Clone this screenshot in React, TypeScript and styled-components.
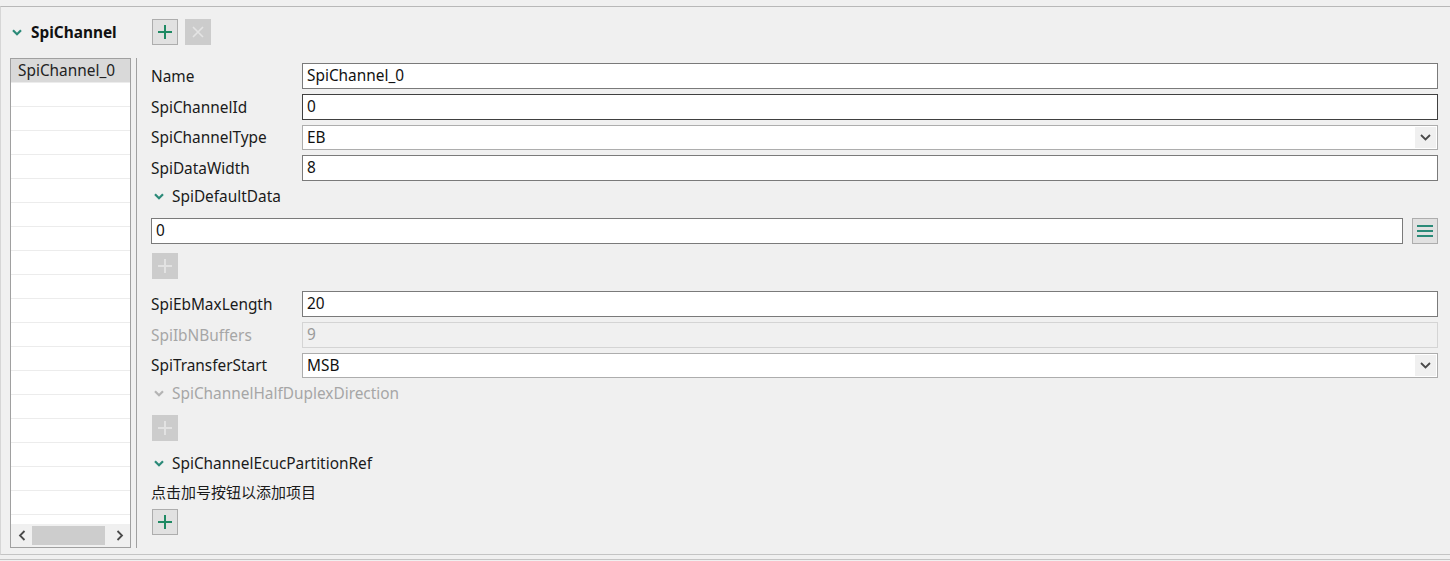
import React from "react";
import styled, { createGlobalStyle } from "styled-components";

const GlobalStyle = createGlobalStyle`
  html, body { margin: 0; padding: 0; background: #f0f0f0; }
  body { font-family: "Noto Sans", "Noto Sans CJK SC", sans-serif; font-size: 15.4px; color: #1a1a1a; }
  * { box-sizing: border-box; }
`;

const TEAL = "#2b8a78";

const Page = styled.div`
  width: 1450px;
  height: 561px;
  padding-top: 6px;
  background: #f0f0f0;
  overflow: hidden;
`;

const Panel = styled.div`
  height: 549px;
  border-top: 1px solid #b8b8b8;
  border-left: 1px solid #d6d6d6;
  border-bottom: 1px solid #c4c4c4;
  display: flex;
  flex-direction: column;
`;

const Footer = styled.div`
  margin-top: 4px;
  border-top: 1px solid #c4c4c4;
  height: 2px;
`;

const HeaderRow = styled.div`
  flex-shrink: 0;
  display: flex;
  align-items: center;
  height: 51px;
  padding-bottom: 1px;
`;

const TitleArea = styled.div`
  width: 150px;
  display: flex;
  align-items: center;
  padding-left: 11px;
  gap: 9px;
`;

const Title = styled.span`
  font-weight: 700;
  font-size: 15.4px;
  color: #111;
`;

const ButtonGroup = styled.div`
  display: flex;
  gap: 7px;
  margin-left: 1px;
`;

const IconButton = styled.button<{ $disabled?: boolean }>`
  width: 26px;
  height: 26px;
  padding: 0;
  display: flex;
  align-items: center;
  justify-content: center;
  flex-shrink: 0;
  background: ${(p) => (p.$disabled ? "#cccccc" : "#e1e1e1")};
  border: 1px solid ${(p) => (p.$disabled ? "#cccccc" : "#adadad")};
  cursor: ${(p) => (p.$disabled ? "default" : "pointer")};
`;

const Body = styled.div`
  flex: 1;
  min-height: 0;
  display: flex;
  padding-bottom: 6px;
`;

const ListBox = styled.div`
  margin-left: 9px;
  width: 121px;
  border: 1px solid #a0a0a0;
  background: #fff;
  display: flex;
  flex-direction: column;
`;

const ListRows = styled.div`
  flex: 1;
  min-height: 0;
  overflow: hidden;
`;

const ListRow = styled.div<{ $selected?: boolean }>`
  height: 24px;
  line-height: 23px;
  padding-left: 7px;
  background: ${(p) => (p.$selected ? "#d9d9d9" : "#fff")};
  border-bottom: 1px solid #ececec;
  white-space: nowrap;
  color: #222;
`;

const HScroll = styled.div`
  flex-shrink: 0;
  height: 23px;
  background: #f0f0f0;
  display: flex;
  align-items: center;
`;

const ScrollArrow = styled.div`
  width: 21px;
  height: 100%;
  display: flex;
  align-items: center;
  justify-content: center;
`;

const ScrollTrack = styled.div`
  flex: 1;
  height: 19px;
`;

const ScrollThumb = styled.div`
  height: 100%;
  background: #cdcdcd;
`;

const Separator = styled.div`
  width: 1px;
  margin-left: 5px;
  background: #a0a0a0;
`;

const Form = styled.div`
  flex: 1;
  padding: 5px 12px 0 14px;
  display: flex;
  flex-direction: column;
`;

const FieldRow = styled.div<{ $mt?: number }>`
  display: flex;
  align-items: center;
  margin-top: ${(p) => p.$mt ?? 5}px;
`;

const Label = styled.div<{ $disabled?: boolean }>`
  width: 151px;
  color: ${(p) => (p.$disabled ? "#a6a6a6" : "#1a1a1a")};
  white-space: nowrap;
`;

const Input = styled.div<{ $disabled?: boolean; $dark?: boolean }>`
  flex: 1;
  height: 26px;
  line-height: 24px;
  padding-left: 4px;
  background: ${(p) => (p.$disabled ? "#f0f0f0" : "#fff")};
  border: 1px solid ${(p) => (p.$disabled ? "#d4d4d4" : p.$dark ? "#404040" : "#7a7a7a")};
  color: ${(p) => (p.$disabled ? "#9a9a9a" : "#111")};
`;

const Select = styled.div`
  flex: 1;
  height: 25px;
  display: flex;
  align-items: center;
  padding-left: 4px;
  background: #fff;
  border: 1px solid #adadad;
  color: #111;
`;

const SelectValue = styled.span`
  flex: 1;
`;

const SelectArrow = styled.div`
  width: 21px;
  height: 21px;
  margin-right: 1px;
  background: #f0f0f0;
  display: flex;
  align-items: center;
  justify-content: center;
`;

const GroupHeader = styled.div<{ $mt?: number; $disabled?: boolean }>`
  display: flex;
  align-items: center;
  height: 26px;
  margin-top: ${(p) => p.$mt ?? 0}px;
  padding-left: 3px;
  gap: 8px;
  color: ${(p) => (p.$disabled ? "#a6a6a6" : "#1a1a1a")};
`;

const ListFieldRow = styled.div<{ $mt?: number }>`
  display: flex;
  align-items: center;
  gap: 9px;
  margin-top: ${(p) => p.$mt ?? 0}px;
`;

const AddRow = styled.div<{ $mt?: number }>`
  display: flex;
  margin-top: ${(p) => p.$mt ?? 0}px;
  padding-left: 1px;
`;

const Hint = styled.div<{ $mt?: number }>`
  height: 24px;
  line-height: 24px;
  font-size: 15px;
  margin-top: ${(p) => p.$mt ?? 0}px;
  font-family: "Noto Sans CJK SC", "Noto Sans", sans-serif;
`;

const Chevron = ({ color = TEAL }: { color?: string }) => (
  <svg width="10" height="7" viewBox="0 0 10 7">
    <path d="M1 1.3 L5 5.3 L9 1.3" fill="none" stroke={color} strokeWidth="2.2" />
  </svg>
);

const Plus = ({ color = "#1f8a64" }: { color?: string }) => (
  <svg width="16" height="16" viewBox="0 0 16 16">
    <path d="M8 1 V15 M1 8 H15" stroke={color} strokeWidth="2" />
  </svg>
);

const Cross = () => (
  <svg width="14" height="14" viewBox="0 0 14 14">
    <path d="M2 2 L12 12 M12 2 L2 12" stroke="#e4e4e4" strokeWidth="1.6" />
  </svg>
);

const MenuIcon = () => (
  <svg width="18" height="14" viewBox="0 0 18 14">
    <path d="M1 2 H17 M1 7 H17 M1 12 H17" stroke={TEAL} strokeWidth="2.2" />
  </svg>
);

const SmallArrow = ({ dir }: { dir: "left" | "right" | "down" }) => {
  const d =
    dir === "left" ? "M6.5 1 L2 5.5 L6.5 10" : dir === "right" ? "M1.5 1 L6 5.5 L1.5 10" : "M1 2 L5.5 6.5 L10 2";
  const w = dir === "down" ? 11 : 8;
  const h = dir === "down" ? 9 : 11;
  return (
    <svg width={w} height={h} viewBox={`0 0 ${w} ${h}`}>
      <path d={d} fill="none" stroke="#4a4a4a" strokeWidth="1.8" />
    </svg>
  );
};

const emptyRows = Array.from({ length: 19 });

export default function App() {
  return (
    <Page>
      <GlobalStyle />
      <Panel>
        <HeaderRow>
          <TitleArea>
            <Chevron />
            <Title>SpiChannel</Title>
          </TitleArea>
          <ButtonGroup>
            <IconButton>
              <Plus />
            </IconButton>
            <IconButton $disabled>
              <Cross />
            </IconButton>
          </ButtonGroup>
        </HeaderRow>
        <Body>
          <ListBox>
            <ListRows>
              <ListRow $selected>SpiChannel_0</ListRow>
              {emptyRows.map((_, i) => (
                <ListRow key={i} />
              ))}
            </ListRows>
            <HScroll>
              <ScrollArrow>
                <SmallArrow dir="left" />
              </ScrollArrow>
              <ScrollTrack>
                <ScrollThumb style={{ width: "73px" }} />
              </ScrollTrack>
              <ScrollArrow>
                <SmallArrow dir="right" />
              </ScrollArrow>
            </HScroll>
          </ListBox>
          <Separator />
          <Form>
            <FieldRow $mt={0}>
              <Label>Name</Label>
              <Input>SpiChannel_0</Input>
            </FieldRow>
            <FieldRow>
              <Label>SpiChannelId</Label>
              <Input $dark>0</Input>
            </FieldRow>
            <FieldRow>
              <Label>SpiChannelType</Label>
              <Select>
                <SelectValue>EB</SelectValue>
                <SelectArrow>
                  <SmallArrow dir="down" />
                </SelectArrow>
              </Select>
            </FieldRow>
            <FieldRow>
              <Label>SpiDataWidth</Label>
              <Input>8</Input>
            </FieldRow>
            <GroupHeader $mt={2}>
              <Chevron />
              <span>SpiDefaultData</span>
            </GroupHeader>
            <ListFieldRow $mt={9}>
              <Input>0</Input>
              <IconButton>
                <MenuIcon />
              </IconButton>
            </ListFieldRow>
            <AddRow $mt={9}>
              <IconButton $disabled>
                <Plus color="#e2e2e2" />
              </IconButton>
            </AddRow>
            <FieldRow $mt={12}>
              <Label>SpiEbMaxLength</Label>
              <Input>20</Input>
            </FieldRow>
            <FieldRow>
              <Label $disabled>SpiIbNBuffers</Label>
              <Input $disabled>9</Input>
            </FieldRow>
            <FieldRow>
              <Label>SpiTransferStart</Label>
              <Select>
                <SelectValue>MSB</SelectValue>
                <SelectArrow>
                  <SmallArrow dir="down" />
                </SelectArrow>
              </Select>
            </FieldRow>
            <GroupHeader $mt={2} $disabled>
              <Chevron color="#b4b4b4" />
              <span>SpiChannelHalfDuplexDirection</span>
            </GroupHeader>
            <AddRow $mt={9}>
              <IconButton $disabled>
                <Plus color="#e2e2e2" />
              </IconButton>
            </AddRow>
            <GroupHeader $mt={9}>
              <Chevron />
              <span>SpiChannelEcucPartitionRef</span>
            </GroupHeader>
            <Hint $mt={4}>点击加号按钮以添加项目</Hint>
            <AddRow $mt={5}>
              <IconButton>
                <Plus />
              </IconButton>
            </AddRow>
          </Form>
        </Body>
      </Panel>
      <Footer />
    </Page>
  );
}
